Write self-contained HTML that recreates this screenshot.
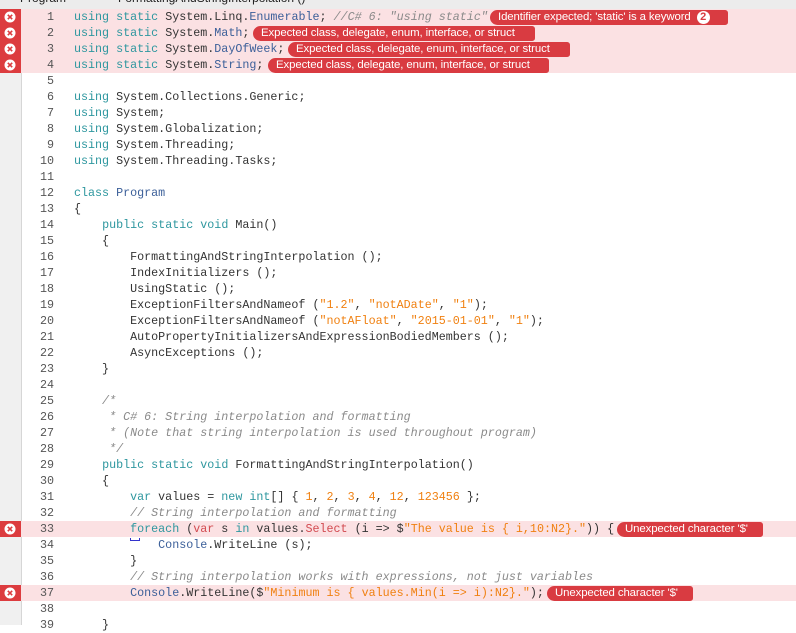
<!DOCTYPE html>
<html><head><style>
body{margin:0;width:796px;height:625px;overflow:hidden;background:#fff;position:relative;font-family:"Liberation Mono",monospace;font-size:11.7px;color:#333}
.top{position:absolute;left:0;top:0;width:796px;height:9px;background:#ececec;border-bottom:1px solid #c8c8c8;overflow:hidden}
.top span{position:absolute;top:-9px;font-family:"Liberation Sans",sans-serif;font-size:12px;color:#222}
.gut{position:absolute;left:0;top:10px;width:21px;height:615px;background:#f0f0f0;border-right:1px solid #d6d6d6}
.row{position:absolute;left:0;width:796px;height:16px}
.err{background:#fbe1e3}
.err .ic{position:absolute;left:0;top:0;width:21px;height:16px;background:#dc3c3f}
.ic svg{position:absolute;left:4px;top:2px}
.n{position:absolute;left:22px;width:32px;text-align:right;top:1px;color:#555}
.c{position:absolute;left:74px;top:1px;white-space:pre}
.k{color:#2e979f}.t{color:#3b5f99}.s{color:#f08010}.cm{color:#8a8a8a;font-style:italic}.r{color:#d24a50}
.b{position:absolute;top:1px;height:15px;background:#d93b41;color:#fff;border-radius:8px 3px 3px 8px;font:11.4px "Liberation Sans",sans-serif;line-height:15px;padding:0 0 0 8px;white-space:nowrap;box-sizing:border-box;overflow:hidden;letter-spacing:-0.1px}
.b2{display:inline-block;width:13px;height:13px;border-radius:50%;background:#fff;color:#d93b41;text-align:center;line-height:13px;margin-left:6px;font-weight:bold;font-size:11px}
</style></head><body>
<div class="top"><span style="left:20px">Program</span><span style="left:118px">FormattingAndStringInterpolation ()</span></div>
<div class="gut"></div>

<div class="row err" style="top:9px"><div class="ic"><svg width="12" height="12"><circle cx="6" cy="6" r="5.5" fill="#fff"/><path d="M3.8 3.8L8.2 8.2M8.2 3.8L3.8 8.2" stroke="#dc3c3f" stroke-width="1.6"/></svg></div><span class="n">1</span><span class="c"><span class="k">using</span> <span class="k">static</span> System.Linq.<span class="t">Enumerable</span>; <span class="cm">//C# 6: "using static"</span></span><span class="b" style="left:490px;width:238px">Identifier expected; 'static' is a keyword<span class="b2">2</span></span></div>
<div class="row err" style="top:25px"><div class="ic"><svg width="12" height="12"><circle cx="6" cy="6" r="5.5" fill="#fff"/><path d="M3.8 3.8L8.2 8.2M8.2 3.8L3.8 8.2" stroke="#dc3c3f" stroke-width="1.6"/></svg></div><span class="n">2</span><span class="c"><span class="k">using</span> <span class="k">static</span> System.<span class="t">Math</span>;</span><span class="b" style="left:253px;width:282px">Expected class, delegate, enum, interface, or struct</span></div>
<div class="row err" style="top:41px"><div class="ic"><svg width="12" height="12"><circle cx="6" cy="6" r="5.5" fill="#fff"/><path d="M3.8 3.8L8.2 8.2M8.2 3.8L3.8 8.2" stroke="#dc3c3f" stroke-width="1.6"/></svg></div><span class="n">3</span><span class="c"><span class="k">using</span> <span class="k">static</span> System.<span class="t">DayOfWeek</span>;</span><span class="b" style="left:288px;width:282px">Expected class, delegate, enum, interface, or struct</span></div>
<div class="row err" style="top:57px"><div class="ic"><svg width="12" height="12"><circle cx="6" cy="6" r="5.5" fill="#fff"/><path d="M3.8 3.8L8.2 8.2M8.2 3.8L3.8 8.2" stroke="#dc3c3f" stroke-width="1.6"/></svg></div><span class="n">4</span><span class="c"><span class="k">using</span> <span class="k">static</span> System.<span class="t">String</span>;</span><span class="b" style="left:268px;width:281px">Expected class, delegate, enum, interface, or struct</span></div>
<div class="row" style="top:73px"><span class="n">5</span></div>
<div class="row" style="top:89px"><span class="n">6</span><span class="c"><span class="k">using</span> System.Collections.Generic;</span></div>
<div class="row" style="top:105px"><span class="n">7</span><span class="c"><span class="k">using</span> System;</span></div>
<div class="row" style="top:121px"><span class="n">8</span><span class="c"><span class="k">using</span> System.Globalization;</span></div>
<div class="row" style="top:137px"><span class="n">9</span><span class="c"><span class="k">using</span> System.Threading;</span></div>
<div class="row" style="top:153px"><span class="n">10</span><span class="c"><span class="k">using</span> System.Threading.Tasks;</span></div>
<div class="row" style="top:169px"><span class="n">11</span></div>
<div class="row" style="top:185px"><span class="n">12</span><span class="c"><span class="k">class</span> <span class="t">Program</span></span></div>
<div class="row" style="top:201px"><span class="n">13</span><span class="c">{</span></div>
<div class="row" style="top:217px"><span class="n">14</span><span class="c">    <span class="k">public</span> <span class="k">static</span> <span class="k">void</span> Main()</span></div>
<div class="row" style="top:233px"><span class="n">15</span><span class="c">    {</span></div>
<div class="row" style="top:249px"><span class="n">16</span><span class="c">        FormattingAndStringInterpolation ();</span></div>
<div class="row" style="top:265px"><span class="n">17</span><span class="c">        IndexInitializers ();</span></div>
<div class="row" style="top:281px"><span class="n">18</span><span class="c">        UsingStatic ();</span></div>
<div class="row" style="top:297px"><span class="n">19</span><span class="c">        ExceptionFiltersAndNameof (<span class="s">"1.2"</span>, <span class="s">"notADate"</span>, <span class="s">"1"</span>);</span></div>
<div class="row" style="top:313px"><span class="n">20</span><span class="c">        ExceptionFiltersAndNameof (<span class="s">"notAFloat"</span>, <span class="s">"2015-01-01"</span>, <span class="s">"1"</span>);</span></div>
<div class="row" style="top:329px"><span class="n">21</span><span class="c">        AutoPropertyInitializersAndExpressionBodiedMembers ();</span></div>
<div class="row" style="top:345px"><span class="n">22</span><span class="c">        AsyncExceptions ();</span></div>
<div class="row" style="top:361px"><span class="n">23</span><span class="c">    }</span></div>
<div class="row" style="top:377px"><span class="n">24</span></div>
<div class="row" style="top:393px"><span class="n">25</span><span class="c cm">    /*</span></div>
<div class="row" style="top:409px"><span class="n">26</span><span class="c cm">     * C# 6: String interpolation and formatting</span></div>
<div class="row" style="top:425px"><span class="n">27</span><span class="c cm">     * (Note that string interpolation is used throughout program)</span></div>
<div class="row" style="top:441px"><span class="n">28</span><span class="c cm">     */</span></div>
<div class="row" style="top:457px"><span class="n">29</span><span class="c">    <span class="k">public</span> <span class="k">static</span> <span class="k">void</span> FormattingAndStringInterpolation()</span></div>
<div class="row" style="top:473px"><span class="n">30</span><span class="c">    {</span></div>
<div class="row" style="top:489px"><span class="n">31</span><span class="c">        <span class="k">var</span> values = <span class="k">new</span> <span class="k">int</span>[] { <span class="s">1</span>, <span class="s">2</span>, <span class="s">3</span>, <span class="s">4</span>, <span class="s">12</span>, <span class="s">123456</span> };</span></div>
<div class="row" style="top:505px"><span class="n">32</span><span class="c cm">        // String interpolation and formatting</span></div>
<div class="row err" style="top:521px"><div class="ic"><svg width="12" height="12"><circle cx="6" cy="6" r="5.5" fill="#fff"/><path d="M3.8 3.8L8.2 8.2M8.2 3.8L3.8 8.2" stroke="#dc3c3f" stroke-width="1.6"/></svg></div><span class="n">33</span><span class="c">        <span class="k">foreach</span> (<span class="r">var</span> s <span class="k">in</span> values.<span class="r">Select</span> (i =&gt; $<span class="s">"The value is { i,10:N2}."</span>)) {</span><span class="b" style="left:617px;width:146px">Unexpected character '$'</span></div>
<div class="row" style="top:537px"><span class="n">34</span><span class="c">            <span class="t">Console</span>.WriteLine (s);</span></div>
<div style="position:absolute;left:130px;top:538px;width:8px;height:2px;border:1px solid #33c;border-top:none"></div>
<div class="row" style="top:553px"><span class="n">35</span><span class="c">        }</span></div>
<div class="row" style="top:569px"><span class="n">36</span><span class="c cm">        // String interpolation works with expressions, not just variables</span></div>
<div class="row err" style="top:585px"><div class="ic"><svg width="12" height="12"><circle cx="6" cy="6" r="5.5" fill="#fff"/><path d="M3.8 3.8L8.2 8.2M8.2 3.8L3.8 8.2" stroke="#dc3c3f" stroke-width="1.6"/></svg></div><span class="n">37</span><span class="c">        <span class="t">Console</span>.WriteLine($<span class="s">"Minimum is { values.Min(i =&gt; i):N2}."</span>);</span><span class="b" style="left:547px;width:146px">Unexpected character '$'</span></div>
<div class="row" style="top:601px"><span class="n">38</span></div>
<div class="row" style="top:617px"><span class="n">39</span><span class="c">    }</span></div>
</body></html>
